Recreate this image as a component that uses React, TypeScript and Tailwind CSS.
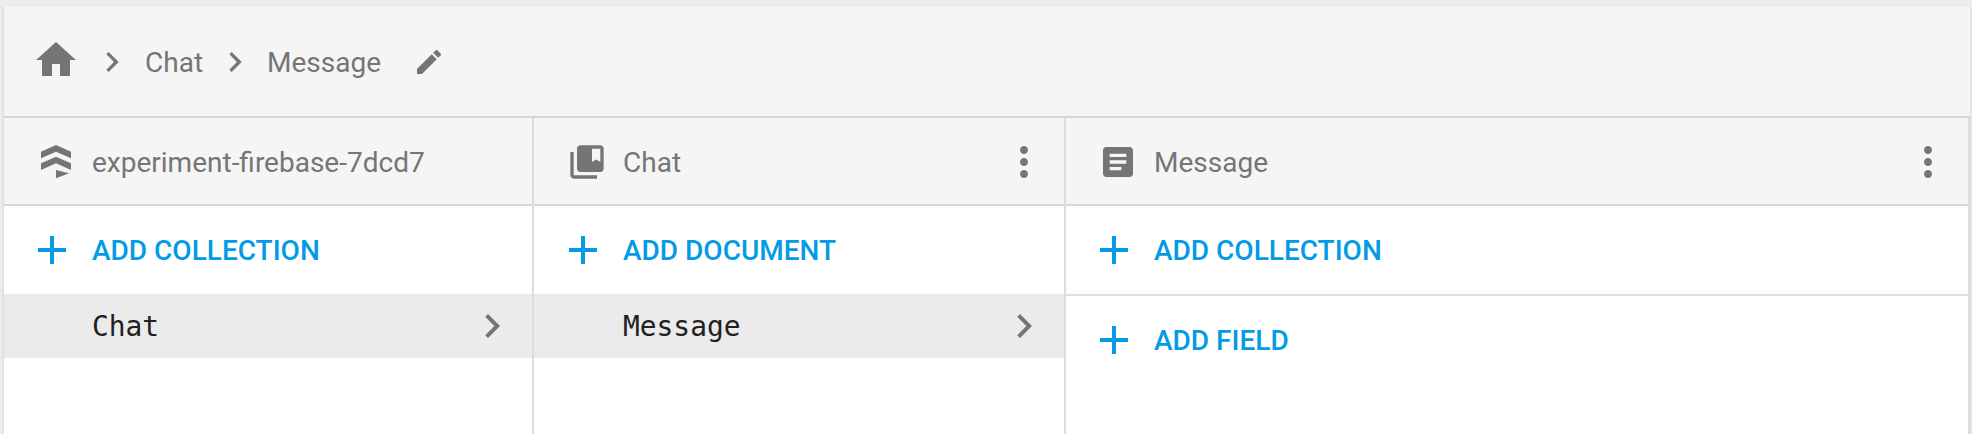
import { clsx } from "clsx";

const mono = "font-['DejaVu_Sans_Mono',monospace]";

function MdIcon({ d, size, className }: { d: string; size: number; className?: string }) {
  return (
    <svg width={size} height={size} viewBox="0 0 24 24" fill="currentColor" className={className}>
      <path d={d} />
    </svg>
  );
}

const icons = {
  home: "M10 20v-6h4v6h5v-8h3L12 3 2 12h3v8z",
  chevron: "M10 6L8.59 7.41 13.17 12l-4.58 4.59L10 18l6-6z",
  edit: "M3 17.25V21h3.75L17.81 9.94l-3.75-3.75L3 17.25zM20.71 7.04c.39-.39.39-1.02 0-1.41l-2.34-2.34c-.39-.39-1.02-.39-1.41 0l-1.83 1.83 3.75 3.75 1.83-1.83z",
  collection: "M4 6H2v14c0 1.1.9 2 2 2h14v-2H4V6zm16-4H8c-1.1 0-2 .9-2 2v12c0 1.1.9 2 2 2h12c1.1 0 2-.9 2-2V4c0-1.1-.9-2-2-2zm0 10l-2.5-1.5L15 12V4h5v8z",
  doc: "M19 3H5c-1.1 0-2 .9-2 2v14c0 1.1.9 2 2 2h14c1.1 0 2-.9 2-2V5c0-1.1-.9-2-2-2zm-5 14H7v-2h7v2zm3-4H7v-2h10v2zm0-4H7V7h10v2z",
  more: "M12 8c1.1 0 2-.9 2-2s-.9-2-2-2-2 .9-2 2 .9 2 2 2zm0 2c-1.1 0-2 .9-2 2s.9 2 2 2 2-.9 2-2-.9-2-2-2zm0 6c-1.1 0-2 .9-2 2s.9 2 2 2 2-.9 2-2-.9-2-2-2z",
  plus: "M19 13h-6v6h-2v-6H5v-2h6V5h2v6h6v2z",
};

function FirestoreIcon() {
  return (
    <svg width="30" height="34" viewBox="0 0 30 34" fill="currentColor">
      <path d="M15 0l15 6.700v6.600L15 6.700 0 13.300V6.700z" />
      <path d="M15 11.700l15 6.600V25l-15-6.700L0 25v-6.700z" />
      <path d="M15 25l13 3.300-13 5z" />
    </svg>
  );
}

function ColumnHeader({ icon, title, more, wide }: { icon: React.ReactNode; title: string; more?: boolean; wide?: boolean }) {
  return (
    <div className="flex h-[88px] items-center border-b-2 border-[#d6d6d6] bg-[#f5f5f5] pt-[2px] text-[#757575]">
      <div className={clsx("flex shrink-0 justify-center pl-[16px]", wide ? "w-[89px]" : "w-[88px]")}>{icon}</div>
      <span className="mt-[2px] flex-1 text-[28px]">{title}</span>
      {more && <MdIcon d={icons.more} size={48} className="mr-[16px]" />}
    </div>
  );
}

function AddButton({ label, wide }: { label: string; wide?: boolean }) {
  return (
    <div className="flex h-[88px] items-center text-[#039be5]">
      <div className={clsx("flex shrink-0 justify-center pl-[8px]", wide ? "w-[89px]" : "w-[88px]")}>
        <MdIcon d={icons.plus} size={48} className="-mx-[4px]" />
      </div>
      <span className="mt-[1px] text-[28px] font-medium">{label}</span>
    </div>
  );
}

function Row({ label, wide }: { label: string; wide?: boolean }) {
  return (
    <div className={clsx("flex h-[64px] items-center justify-between bg-[#ebebeb] pr-[16px]", wide ? "pl-[89px]" : "pl-[88px]")}>
      <span className={`${mono} mt-[1px] text-[27.9px] text-[#212121]`}>{label}</span>
      <MdIcon d={icons.chevron} size={48} className="text-[#757575]" />
    </div>
  );
}

export default function App() {
  return (
    <div className="h-[434px] w-[1972px] overflow-hidden bg-[#e9edf0] pt-[6px] font-['Roboto',sans-serif]">
      <div className="ml-[4px] h-full w-[1966px] bg-white shadow-[0_1px_3px_rgba(0,0,0,0.14)]">
        <div className="flex h-[112px] items-center border-b-2 border-[#d6d6d6] bg-[#f5f5f5] text-[#757575]">
          <MdIcon d={icons.home} size={48} className="-mt-[2px] ml-[28px]" />
          <MdIcon d={icons.chevron} size={40} className="mt-[2px] ml-[12px]" />
          <span className="mt-[3px] ml-[13px] text-[28px]">Chat</span>
          <MdIcon d={icons.chevron} size={40} className="mt-[2px] ml-[12px]" />
          <span className="mt-[3px] ml-[12px] text-[28px]">Message</span>
          <MdIcon d={icons.edit} size={32} className="mt-[2px] ml-[32px]" />
        </div>
        <div className="flex h-[316px]">
          <div className="w-[530px] border-r-2 border-[#dcdcdc]">
            <ColumnHeader icon={<FirestoreIcon />} title="experiment-firebase-7dcd7" />
            <AddButton label="ADD COLLECTION" />
            <Row label="Chat" />
          </div>
          <div className="w-[532px] border-r-2 border-[#dcdcdc]">
            <ColumnHeader icon={<MdIcon d={icons.collection} size={40} />} title="Chat" more wide />
            <AddButton label="ADD DOCUMENT" wide />
            <Row label="Message" wide />
          </div>
          <div className="flex-1 border-r-2 border-[#dcdcdc]">
            <ColumnHeader icon={<MdIcon d={icons.doc} size={40} />} title="Message" more />
            <div className="border-b-2 border-[#e0e0e0]">
              <AddButton label="ADD COLLECTION" />
            </div>
            <AddButton label="ADD FIELD" />
          </div>
        </div>
      </div>
    </div>
  );
}
